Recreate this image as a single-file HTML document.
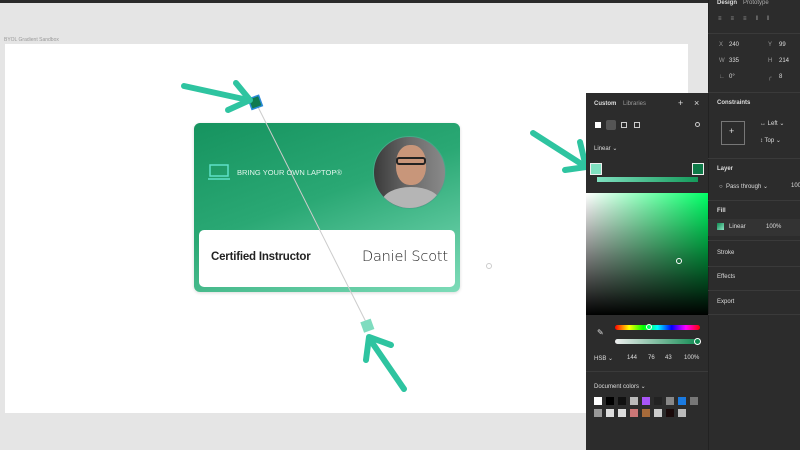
<!DOCTYPE html>
<html><head><meta charset="utf-8"><style>
*{margin:0;padding:0;box-sizing:border-box}
body{width:800px;height:450px;overflow:hidden;background:#e5e5e5;font-family:"Liberation Sans",sans-serif;position:relative}
.abs{position:absolute}
.dark{background:#2c2c2c;color:#ddd}
.t{font-size:6px;color:#ddd;position:absolute}
.sep{position:absolute;height:1px;background:#3a3a3a}
</style></head><body>
<div class="abs" style="left:0;top:0;width:708px;height:3px;background:#2a2a2a"></div>
<div class="t" style="left:4px;top:37px;color:#999;font-size:5px">BYOL Gradient Sandbox</div>
<div class="abs" style="left:5px;top:44px;width:683px;height:369px;background:#fff"></div>

<!-- card -->
<div class="abs" style="left:194px;top:123px;width:266px;height:169px;border-radius:6px;background:linear-gradient(160deg,#16935f 0%,#2aa874 45%,#7edcb9 100%);box-shadow:0 1px 3px rgba(0,0,0,.15)"></div>
<svg class="abs" style="left:208px;top:163px" width="24" height="18"><rect x="2" y="2" width="18" height="11" fill="none" stroke="#5fe0c8" stroke-width="1.5"/><line x1="0" y1="16" x2="22" y2="16" stroke="#5fe0c8" stroke-width="1.5"/></svg>
<div class="t" style="left:237px;top:168px;font-size:7.5px;color:#e0f5ec">BRING YOUR OWN LAPTOP®</div>
<div class="abs" style="left:373px;top:136px;width:73px;height:73px;border-radius:50%;background:linear-gradient(90deg,#3a3a3a,#6a6a6a 50%,#8a8a8a);border:1px solid #4a8;overflow:hidden">
<div style="position:absolute;left:22px;top:8px;width:30px;height:40px;border-radius:45%;background:#c8967a"></div>
<div style="position:absolute;left:8px;top:50px;width:58px;height:30px;border-radius:50% 50% 0 0;background:#b5b5b5"></div>
<div style="position:absolute;left:22px;top:20px;width:30px;height:8px;border:2px solid #222;border-radius:3px"></div></div>
<div class="abs" style="left:199px;top:230px;width:256px;height:57px;background:#fff;border-radius:5px"></div>
<div class="abs" style="left:211px;top:251px;font-size:11.5px;font-weight:bold;color:#222;letter-spacing:-.2px">Certified Instructor</div>
<div class="abs" style="left:362px;top:249px;font-size:14.5px;color:#222;font-family:'DejaVu Sans',sans-serif;font-weight:300;letter-spacing:-.2px">Daniel Scott</div>

<!-- gradient line & handles -->
<svg class="abs" style="left:0;top:0" width="708" height="450">
<line x1="256" y1="103" x2="368" y2="326" stroke="#ccc" stroke-width="1"/>
<rect x="250" y="97" width="11" height="11" fill="#0f7a50" stroke="#2a8ad8" stroke-width="1.5" transform="rotate(-20 255 103)"/>
<rect x="362" y="320" width="11" height="11" fill="#7fdcbf" transform="rotate(-20 368 326)"/>
<circle cx="489" cy="266" r="2.5" fill="none" stroke="#ccc"/>
<g stroke="#2ec4a0" stroke-width="6" stroke-linecap="round" fill="none" stroke-linejoin="round">
<line x1="184" y1="86" x2="248" y2="100"/><polyline points="236,83 250,100 228,110"/>
<line x1="404" y1="389" x2="371" y2="341"/><polyline points="391,345 369,337 366,360"/>
<line x1="533" y1="133" x2="583" y2="165"/><polyline points="580,142 586,167 565,170"/>
</g>
</svg>

<!-- color picker -->
<div class="abs dark" style="left:586px;top:93px;width:122px;height:357px"></div>
<div class="t" style="left:594px;top:101px;font-weight:bold">Custom</div>
<div class="t" style="left:623px;top:101px;color:#999">Libraries</div>
<div class="t" style="left:678px;top:98px;font-size:9px">+</div>
<div class="t" style="left:694px;top:98px;font-size:9px">×</div>
<div class="abs" style="left:595px;top:122px;width:6px;height:6px;background:#fff"></div>
<div class="abs" style="left:606px;top:120px;width:10px;height:10px;background:#555;border-radius:2px"></div>
<div class="abs" style="left:621px;top:122px;width:6px;height:6px;border:1px solid #ccc"></div>
<div class="abs" style="left:634px;top:122px;width:6px;height:6px;border:1px solid #ccc"></div>
<div class="abs" style="left:695px;top:122px;width:5px;height:5px;border:1px solid #ccc;border-radius:50%"></div>
<div class="t" style="left:594px;top:145px">Linear ⌄</div>
<div class="abs" style="left:590px;top:163px;width:12px;height:12px;background:#7fe0c0;border:1.5px solid #eee"></div>
<div class="abs" style="left:692px;top:163px;width:12px;height:12px;background:#0e7a48;border:1.5px solid #eee"></div>
<div class="abs" style="left:597px;top:177px;width:101px;height:5px;background:linear-gradient(90deg,#7fe0c0,#149a5a)"></div>
<div class="abs" style="left:586px;top:193px;width:122px;height:122px;background:linear-gradient(to bottom,transparent,#000),linear-gradient(to right,#fff,#00ff66)"></div>
<div class="abs" style="left:676px;top:258px;width:6px;height:6px;border:1px solid #fff;border-radius:50%"></div>
<div class="t" style="left:597px;top:328px;font-size:8px">✎</div>
<div class="abs" style="left:615px;top:325px;width:85px;height:5px;border-radius:3px;background:linear-gradient(90deg,red,#ff0,#0f0,#0ff,#00f,#f0f,red)"></div>
<div class="abs" style="left:646px;top:324px;width:6px;height:6px;border:1.5px solid #fff;border-radius:50%"></div>
<div class="abs" style="left:615px;top:339px;width:85px;height:5px;border-radius:3px;background:linear-gradient(90deg,#eee,#0e8a50)"></div>
<div class="abs" style="left:694px;top:338px;width:7px;height:7px;border:1.5px solid #fff;border-radius:50%;background:#0e8a50"></div>
<div class="t" style="left:594px;top:355px">HSB ⌄</div>
<div class="t" style="left:627px;top:355px">144</div><div class="t" style="left:648px;top:355px">76</div><div class="t" style="left:665px;top:355px">43</div><div class="t" style="left:684px;top:355px">100%</div>
<div class="sep" style="left:586px;top:371px;width:122px"></div>
<div class="t" style="left:594px;top:383px">Document colors ⌄</div>
<div class="abs" style="left:594px;top:397px;display:flex;gap:4px">
<i style="width:8px;height:8px;background:#fff"></i><i style="width:8px;height:8px;background:#000"></i><i style="width:8px;height:8px;background:#111"></i><i style="width:8px;height:8px;background:#bbb"></i><i style="width:8px;height:8px;background:#a855f7"></i><i style="width:8px;height:8px;background:#222"></i><i style="width:8px;height:8px;background:#888"></i><i style="width:8px;height:8px;background:#1a7ae0"></i><i style="width:8px;height:8px;background:#777"></i></div>
<div class="abs" style="left:594px;top:409px;display:flex;gap:4px">
<i style="width:8px;height:8px;background:#999"></i><i style="width:8px;height:8px;background:#ddd"></i><i style="width:8px;height:8px;background:#ddd"></i><i style="width:8px;height:8px;background:#c77"></i><i style="width:8px;height:8px;background:#a66a3a"></i><i style="width:8px;height:8px;background:#ccc"></i><i style="width:8px;height:8px;background:#1a0a0a"></i><i style="width:8px;height:8px;background:#bbb"></i></div>

<!-- right panel -->
<div class="abs dark" style="left:708px;top:0;width:92px;height:450px;background:#2c2c2c;border-left:1px solid #222"></div>
<div class="t" style="left:717px;top:0px;font-weight:bold">Design</div><div class="t" style="left:743px;top:0px;color:#aaa">Prototype</div>
<div class="t" style="left:718px;top:16px;color:#999;letter-spacing:9px">≡≡≡‖‖</div>
<div class="sep" style="left:708px;top:33px;width:92px"></div>
<div class="t" style="left:719px;top:42px;color:#999">X</div><div class="t" style="left:729px;top:42px">240</div>
<div class="t" style="left:768px;top:42px;color:#999">Y</div><div class="t" style="left:779px;top:42px">99</div>
<div class="t" style="left:719px;top:58px;color:#999">W</div><div class="t" style="left:729px;top:58px">335</div>
<div class="t" style="left:768px;top:58px;color:#999">H</div><div class="t" style="left:779px;top:58px">214</div>
<div class="t" style="left:719px;top:74px;color:#999">∟</div><div class="t" style="left:729px;top:74px">0°</div>
<div class="t" style="left:768px;top:74px;color:#999">╭</div><div class="t" style="left:779px;top:74px">8</div>
<div class="sep" style="left:708px;top:92px;width:92px"></div>
<div class="t" style="left:717px;top:100px;font-weight:bold">Constraints</div>
<div class="abs" style="left:721px;top:121px;width:24px;height:24px;border:1px solid #777"></div>
<div class="t" style="left:729px;top:126px;font-size:9px">+</div>
<div class="t" style="left:760px;top:120px">↔ Left ⌄</div><div class="t" style="left:760px;top:137px">↕ Top ⌄</div>
<div class="sep" style="left:708px;top:158px;width:92px"></div>
<div class="t" style="left:717px;top:166px;font-weight:bold">Layer</div>
<div class="t" style="left:719px;top:183px">○ &nbsp;Pass through ⌄</div><div class="t" style="left:791px;top:183px">100</div>
<div class="sep" style="left:708px;top:200px;width:92px"></div>
<div class="t" style="left:717px;top:208px;font-weight:bold">Fill</div>
<div class="abs" style="left:708px;top:219px;width:92px;height:17px;background:#333"></div>
<div class="abs" style="left:717px;top:223px;width:7px;height:7px;background:linear-gradient(135deg,#0e8a50,#8fe6c6)"></div>
<div class="t" style="left:729px;top:224px">Linear</div><div class="t" style="left:766px;top:224px">100%</div>
<div class="sep" style="left:708px;top:240px;width:92px"></div>
<div class="t" style="left:717px;top:250px">Stroke</div>
<div class="sep" style="left:708px;top:266px;width:92px"></div>
<div class="t" style="left:717px;top:274px">Effects</div>
<div class="sep" style="left:708px;top:290px;width:92px"></div>
<div class="t" style="left:717px;top:299px">Export</div>
<div class="sep" style="left:708px;top:314px;width:92px"></div>
</body></html>
